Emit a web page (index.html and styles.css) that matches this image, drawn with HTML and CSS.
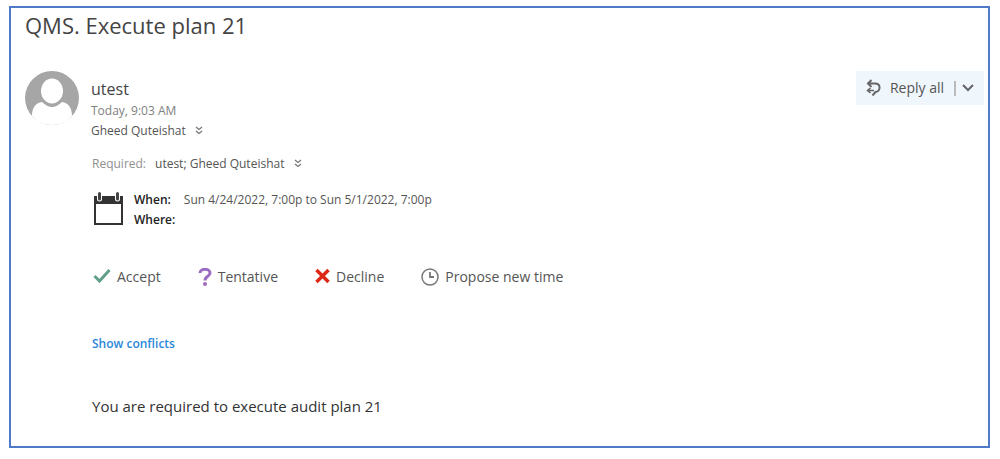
FILE: index.html
```html
<!DOCTYPE html>
<html lang="en">
<head>
<meta charset="utf-8">
<title>QMS. Execute plan 21</title>
<link rel="stylesheet" href="styles.css">
</head>
<body>
<main class="message">
  <h1 class="subject">QMS. Execute plan 21</h1>
  <div class="layout">
    <svg class="avatar" viewBox="0 0 54 54" aria-hidden="true">
      <circle cx="27" cy="27" r="27" fill="#a6a6a6"/>
      <ellipse cx="27" cy="20" rx="11" ry="12.500" fill="#fff"/>
      <path d="M7 45C7 36 11 32 17 31C20 34 24 36 27 36S34 34 37 31C43 32 47 36 47 45C42 51 35 54 27 54S12 51 7 45Z" fill="#fff"/>
    </svg>
    <div class="content">
      <header class="head">
        <div class="sender">
          <div class="name">utest</div>
          <div class="date">Today, 9:03 AM</div>
          <div class="people">Gheed Quteishat
            <button class="expand" aria-label="Show recipients"><svg width="8" height="9" viewBox="0 0 8 9"><path d="M1 1L4 3.500L7 1M1 5L4 7.500L7 5"/></svg></button>
          </div>
        </div>
        <div class="reply">
          <button class="reply-main">
            <svg width="15" height="18" viewBox="0 0 15 18"><path d="M5.500 1L2 4.500L5.500 8M2 4.500H9C15 4.500 15 12 9.500 13L6.500 16.500"/><path d="M4.500 9L1.500 11.500L4.500 14M1.500 11.500H8" stroke-width="1.600"/></svg>
            Reply all
          </button>
          <button class="reply-more" aria-label="More reply options"><svg width="12" height="8" viewBox="0 0 12 8"><path d="M1 1L6 6L11 1"/></svg></button>
        </div>
      </header>
      <div class="required"><span class="label">Required:</span><span>utest; Gheed Quteishat</span>
        <button class="expand" aria-label="Show required attendees"><svg width="8" height="9" viewBox="0 0 8 9"><path d="M1 1L4 3.500L7 1M1 5L4 7.500L7 5"/></svg></button>
      </div>
      <section class="event">
        <svg width="30" height="36" viewBox="0 0 30 36" aria-hidden="true">
          <path d="M1 6H30V14H1Z" fill="#333"/>
          <path d="M2 8V34H29V8" fill="none" stroke="#333" stroke-width="2"/>
          <path d="M6.500 4V9M24.500 4V9" stroke="#fff" stroke-width="5" stroke-linecap="round"/>
          <path d="M6.500 3.500V9M24.500 3.500V9" stroke="#444" stroke-width="3" stroke-linecap="round"/>
        </svg>
        <dl class="details">
          <div class="detail"><dt>When:</dt><dd>Sun 4/24/2022, 7:00p to Sun 5/1/2022, 7:00p</dd></div>
          <div class="detail"><dt>Where:</dt><dd></dd></div>
        </dl>
      </section>
      <div class="actions">
        <button class="action"><svg width="18" height="18" viewBox="0 0 18 18"><path d="M1.500 8L6.500 13L16.500 2" fill="none" stroke="#62a08c" stroke-width="3"/></svg>Accept</button>
        <button class="action"><svg width="14" height="18" viewBox="0 0 14 18"><path d="M2 5C2 0 12 0 12 5C12 8.500 7 8 7 12.500" fill="none" stroke="#9b6cc0" stroke-width="3"/><circle cx="7" cy="16" r="2" fill="#9b6cc0"/></svg>Tentative</button>
        <button class="action"><svg width="15" height="18" viewBox="0 0 15 18"><path d="M1.500 2L13.500 14M13.500 2L1.500 14" fill="none" stroke="#dc2814" stroke-width="3.500"/></svg>Decline</button>
        <button class="action"><svg width="18" height="18" viewBox="0 0 18 18"><g fill="none" stroke="#777"><circle cx="9" cy="9" r="8" stroke-width="1.500"/><path d="M9 4V9H13" stroke-width="1.800"/></g></svg>Propose new time</button>
      </div>
      <a class="conflicts" href="#">Show conflicts</a>
      <p class="body-text">You are required to execute audit plan 21</p>
    </div>
  </div>
</main>
</body>
</html>
```
FILE: styles.css
```css
* {
  box-sizing: border-box;
}

body {
  margin: 6px 10px 0 9px;
  background: #fff;
  color: #555;
  font-family: "Segoe UI", "Open Sans", "Noto Sans", sans-serif;
  font-size: 12px;
  line-height: 20px;
}

button {
  padding: 0;
  border: 0;
  background: none;
  color: inherit;
  font: inherit;
  cursor: pointer;
}

.message {
  padding: 3px 4px 30px 14px;
  border: 2px solid #4f7ac7;
}

.subject {
  margin: 0 0 32px;
  color: #444;
  font-size: 22px;
  font-weight: 400;
  line-height: 28px;
}

.layout {
  display: flex;
  align-items: flex-start;
  gap: 12px;
}

.avatar {
  flex: none;
  width: 54px;
  height: 54px;
}

.content {
  flex: 1;
}

.head {
  display: flex;
  justify-content: space-between;
  align-items: flex-start;
}

.sender {
  padding-top: 8px;
}

.name {
  color: #444;
  font-size: 16px;
}

.date {
  color: #808080;
  line-height: 24px;
}

.people {
  line-height: 16px;
}

.expand {
  margin-left: 6px;
}

.expand svg {
  display: block;
  fill: none;
  stroke: #777;
  stroke-width: 1.3;
}

.reply {
  display: flex;
  align-items: center;
  height: 34px;
  padding: 0 10px;
  background: #eff6fc;
  font-size: 14px;
}

.reply-main,
.reply-more {
  display: flex;
  align-items: center;
}

.reply-main {
  gap: 9px;
}

.reply-more {
  height: 15px;
  margin-left: 10px;
  padding-left: 6px;
  border-left: 2px solid #bbb;
}

.reply svg {
  fill: none;
  stroke: #666;
  stroke-width: 2;
}

.required {
  margin: 15px 0 0 1px;
}

.label {
  margin-right: 9px;
  color: #909090;
}

.event {
  display: flex;
  gap: 11px;
  margin: 16px 0 0 2px;
}

.details {
  margin: 0;
}

.detail {
  display: flex;
  gap: 13px;
}

dt {
  color: #222;
  font-weight: 600;
}

dd {
  margin: 0;
}

.actions {
  display: flex;
  gap: 37px;
  margin: 37px 0 0 2px;
  font-size: 14px;
}

.action {
  display: flex;
  align-items: center;
  gap: 6px;
}

.conflicts {
  display: inline-block;
  margin: 47px 0 0 1px;
  color: #2b88d8;
  font-weight: 600;
  text-decoration: none;
}

.body-text {
  margin: 42px 0 0 1px;
  color: #333;
  font-size: 15px;
}
```
